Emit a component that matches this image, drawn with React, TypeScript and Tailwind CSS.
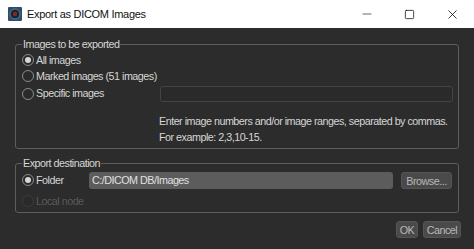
import { Minus, Square, X } from "lucide-react";

const font = { fontFamily: '"Liberation Sans", Arial, sans-serif' };

const Radio = ({ checked, disabled }: { checked?: boolean; disabled?: boolean }) => (
  <span
    className={`flex h-[12px] w-[12px] items-center justify-center rounded-full border ${
      disabled ? "border-[#3c3c3c]" : "border-[#8c8c8c]"
    } bg-[#2a2a2a]`}
  >
    {checked && <span className="h-[6px] w-[6px] rounded-full bg-[#d8d8d8]" />}
  </span>
);

const AppIcon = () => (
  <svg width="14" height="14" viewBox="0 0 14 14">
    <rect x="0" y="0" width="14" height="14" rx="1" fill="#2c4f70" />
    <circle cx="7" cy="7" r="5" fill="#1d2530" stroke="#6c8aa8" strokeWidth="0.8" />
    <circle cx="7" cy="7" r="2.2" fill="#7a2a2a" />
  </svg>
);

export default function App() {
  return (
    <div
      className="flex h-[249px] w-[474px] flex-col overflow-hidden text-[10.75px] tracking-[-0.5px]"
      style={font}
    >
      {/* title bar */}
      <div className="flex h-[28px] items-center bg-white text-black">
        <div className="ml-[8px] flex items-center">
          <AppIcon />
        </div>
        <span className="ml-[5px] text-[11px] tracking-[-0.3px] text-[#111]">Export as DICOM Images</span>
        <div className="ml-auto flex h-full items-center">
          <div className="flex h-full w-[42px] items-center justify-center">
            <Minus className="h-[14px] w-[14px]" strokeWidth={1} />
          </div>
          <div className="flex h-full w-[42px] items-center justify-center">
            <Square className="h-[11px] w-[11px]" strokeWidth={1.6} />
          </div>
          <div className="flex h-full w-[44px] items-center justify-center">
            <X className="h-[15px] w-[15px]" strokeWidth={1.2} />
          </div>
        </div>
      </div>

      {/* body */}
      <div className="flex flex-1 flex-col bg-[#2c2c2c] px-[15px] pt-[9px] text-[#d6d6d6]">
        <fieldset className="h-[112px] rounded-[3px] border border-[#5e5e5e] pl-[6px] pr-[5px]">
          <legend className="px-[1px] leading-[14px]">Images to be exported</legend>
          <div className="mt-[1px] flex h-[16px] items-center gap-[2px]">
            <Radio checked />
            <span>All images</span>
          </div>
          <div className="flex h-[16px] items-center gap-[2px]">
            <Radio />
            <span>Marked images (51 images)</span>
          </div>
          <div className="mt-[1px] flex h-[17px] items-center gap-[2px]">
            <Radio />
            <span className="w-[122px]">Specific images</span>
            <div className="h-[16px] flex-1 rounded-[3px] border border-[#444444] bg-[#2a2a2a]" />
          </div>
          <div className="ml-[137px] mt-[11px] whitespace-nowrap leading-[16px]">
            <div>Enter image numbers and/or image ranges, separated by commas.</div>
            <div>For example: 2,3,10-15.</div>
          </div>
        </fieldset>

        <fieldset className="mt-[7px] h-[57px] rounded-[3px] border border-[#5e5e5e] pl-[6px] pr-[6px]">
          <legend className="px-[1px] leading-[14px]">Export destination</legend>
          <div className="mt-[1px] flex h-[18px] items-center gap-[2px]">
            <Radio checked />
            <span className="w-[51px]">Folder</span>
            <div className="flex h-[17px] flex-1 items-center rounded-[3px] bg-[#5c5c5c] pl-[3px] text-[#e0e0e0]">
              C:/DICOM DB/Images
            </div>
            <button className="ml-[6px] h-[17px] w-[51px] rounded-[3px] border border-[#555] bg-[#4a4a4a] text-[#b8b8b8]">
              Browse...
            </button>
          </div>
          <div className="mt-[4px] flex h-[16px] items-center gap-[2px] text-[#5a5a5a]">
            <Radio disabled />
            <span>Local node</span>
          </div>
        </fieldset>

        <div className="mt-[8px] flex justify-end gap-[5px]">
          <button className="h-[17px] w-[22px] rounded-[3px] border border-[#555] bg-[#4a4a4a] text-[#b8b8b8]">OK</button>
          <button className="-mr-[2px] h-[17px] w-[38px] rounded-[3px] border border-[#555] bg-[#4a4a4a] text-[#b8b8b8]">
            Cancel
          </button>
        </div>
      </div>
    </div>
  );
}
